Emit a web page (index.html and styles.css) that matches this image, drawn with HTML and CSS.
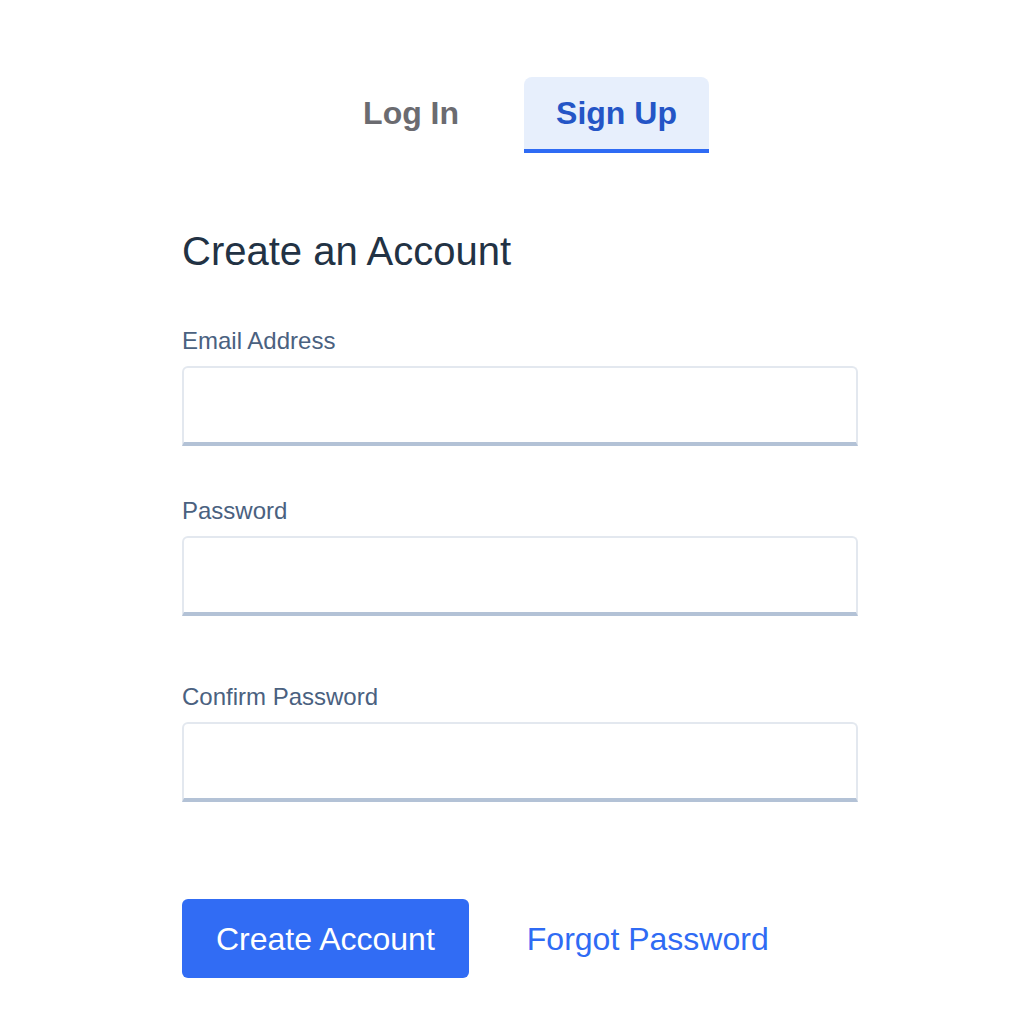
FILE: index.html
```html
<!DOCTYPE html>
<html lang="en">
<head>
<meta charset="utf-8">
<title>Sign Up</title>
<link rel="stylesheet" href="styles.css">
</head>
<body>
<div class="page">
  <nav class="tabs">
    <a class="tab" href="#">Log In</a>
    <a class="tab tab-active" href="#">Sign Up</a>
  </nav>
  <h1 class="title">Create an Account</h1>
  <form class="form">
    <label class="label label-first" for="email">Email Address</label>
    <input class="field" id="email" type="email">
    <label class="label" for="pw">Password</label>
    <input class="field" id="pw" type="password">
    <label class="label label-wide" for="pw2">Confirm Password</label>
    <input class="field" id="pw2" type="password">
    <div class="actions">
      <button class="btn" type="button">Create Account</button>
      <a class="link" href="#">Forgot Password</a>
    </div>
  </form>
</div>
</body>
</html>
```

FILE: styles.css
```css
* { box-sizing: border-box; }
html, body { margin: 0; padding: 0; background: #ffffff; }
body {
  font-family: "Liberation Sans", Arial, Helvetica, sans-serif;
}
.page {
  width: 858px;
  padding: 77px 0 0 182px;
}
.tabs {
  display: flex;
  justify-content: center;
  gap: 33px;
  height: 76px;
}
.tab {
  display: block;
  font-size: 32px;
  font-weight: bold;
  line-height: 40px;
  padding: 16px 32px 16px;
  color: #6b6b70;
  text-decoration: none;
  border-bottom: 4px solid transparent;
  border-radius: 8px 8px 0 0;
}
.tab-active {
  background: #e7effc;
  color: #2455c6;
  border-bottom-color: #2f6bf4;
}
.title {
  margin: 74px 0 0;
  font-size: 40px;
  line-height: 48px;
  font-weight: normal;
  color: #223244;
}
.form {
  display: flex;
  flex-direction: column;
}
.label {
  display: block;
  font-size: 24px;
  line-height: 28px;
  color: #4a6180;
  margin: 51px 0 11px;
}
.label-first { margin-top: 52px; }
.label-wide { margin-top: 67px; }
.field {
  display: block;
  width: 100%;
  height: 80px;
  margin: 0;
  padding: 0 16px;
  font: inherit;
  font-size: 24px;
  border: 2px solid #e3e8ef;
  border-bottom: 4px solid #b3c2d6;
  border-radius: 6px 6px 0 0;
  background: #ffffff;
  outline: none;
}
.actions {
  display: flex;
  align-items: center;
  margin-top: 97px;
}
.btn {
  height: 79px;
  padding: 1px 34px 0;
  border: none;
  border-radius: 6px;
  background: #316cf4;
  color: #ffffff;
  font-family: inherit;
  font-size: 32px;
  line-height: 78px;
  cursor: pointer;
}
.link {
  margin-left: 58px;
  margin-top: 2px;
  font-size: 32px;
  color: #2f6bf4;
  text-decoration: none;
}
```
